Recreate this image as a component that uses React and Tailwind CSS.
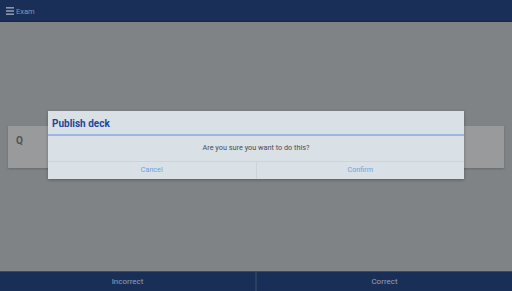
import React from 'react';

const App = () => {
  return (
    <div className="relative flex flex-col h-[291px] w-[512px] overflow-hidden bg-[#7f8386] font-['Roboto',sans-serif]">
      <div className="flex items-center h-[22px] bg-[#192f58] pl-[6px] gap-[2px] border-b border-[#15284b]">
        <svg width="8" height="8" viewBox="0 0 8 8" className="text-[#8a96ac]">
          <rect x="0" y="0" width="8" height="1.6" fill="currentColor" />
          <rect x="0" y="3.2" width="8" height="1.6" fill="currentColor" />
          <rect x="0" y="6.4" width="8" height="1.6" fill="currentColor" />
        </svg>
        <span className="text-[7.5px] leading-none mt-[2px] text-[#8a96ac]">Exam</span>
      </div>

      <div className="flex-1 flex items-center px-[8px]">
        <div className="w-full h-[42px] bg-[#999a9b] shadow-[0_1px_2px_rgba(0,0,0,0.2)] px-[8px] pt-[10px] text-[10px] leading-none">
          <span className="font-bold text-[#505254]">Q</span>
        </div>
      </div>

      <div className="flex h-[20px] bg-[#192f58] border-t border-[#3a4a66]">
        <div className="flex-1 flex items-center justify-center text-[8px] text-[#98a0b0]">Incorrect</div>
        <div className="w-[2px] bg-[#2c3f62]" />
        <div className="flex-1 flex items-center justify-center text-[8px] text-[#98a0b0]">Correct</div>
      </div>

      <div className="absolute left-[48px] top-[111px] w-[416px] h-[68px] bg-[#d9e0e6] shadow-[0_1px_3px_rgba(0,0,0,0.3)] flex flex-col">
        <div className="h-[23px] flex items-center px-[4px] pt-[1px] text-[10px] font-bold text-[#22469a]">Publish deck</div>
        <div className="h-[2px] bg-[#9bb6e6]" />
        <div className="h-[25px] flex items-center justify-center text-[7.3px] text-[#4a4d52]">
          Are you sure you want to do this?
        </div>
        <div className="flex flex-1 border-t border-[#ccd3da]">
          <div className="flex-1 flex items-center justify-center text-[7.2px] text-[#6f9fe4]">Cancel</div>
          <div className="w-px bg-[#ccd3da]" />
          <div className="flex-1 flex items-center justify-center text-[7.2px] text-[#6f9fe4]">Confirm</div>
        </div>
      </div>
    </div>
  );
};

export default App;
